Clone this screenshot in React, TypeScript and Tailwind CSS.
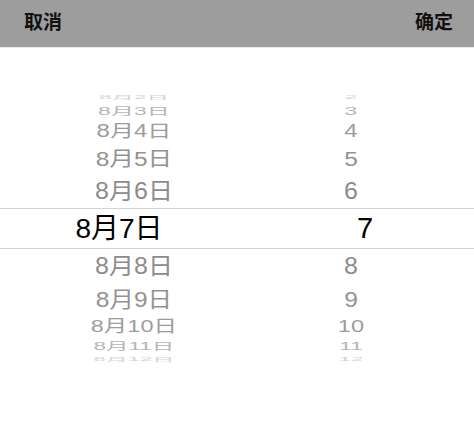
import React from 'react';

type Row = {
  day: number;
  h: number; // row height in px
  sy: number; // vertical squash from the wheel curve
  sx: number; // horizontal shrink from perspective
  color: string;
};

// rows above and below the selected one, farthest first / nearest first
const above: Row[] = [
  { day: 2, h: 12, sy: 0.2, sx: 0.9, color: '#d4d4d4' },
  { day: 3, h: 16, sy: 0.42, sx: 0.92, color: '#b4b4b4' },
  { day: 4, h: 25, sy: 0.7, sx: 0.96, color: '#9c9c9c' },
  { day: 5, h: 30, sy: 0.82, sx: 0.98, color: '#929292' },
  { day: 6, h: 34, sy: 0.92, sx: 1, color: '#8c8c8c' },
];

const below: Row[] = [
  { day: 8, h: 35, sy: 0.92, sx: 1, color: '#8c8c8c' },
  { day: 9, h: 30, sy: 0.85, sx: 0.98, color: '#929292' },
  { day: 10, h: 24, sy: 0.66, sx: 0.94, color: '#9c9c9c' },
  { day: 11, h: 16, sy: 0.42, sx: 0.9, color: '#b4b4b4' },
  { day: 12, h: 11, sy: 0.2, sx: 0.88, color: '#d4d4d4' },
];

const FONT = "font-['Liberation_Sans','Noto_Sans_CJK_SC',sans-serif]";

function WheelRow({ row }: { row: Row }) {
  const t = { transform: `scale(${row.sx}, ${row.sy})`, color: row.color };
  return (
    <div className="flex items-center overflow-hidden" style={{ height: row.h }}>
      <div className="w-[268px] flex justify-center">
        <span className="text-[25px] leading-none whitespace-nowrap" style={t}>
          8月{row.day}日
        </span>
      </div>
      <div className="w-[166px] flex justify-center">
        <span className="text-[25px] leading-none" style={t}>
          {row.day}
        </span>
      </div>
    </div>
  );
}

export default function App() {
  return (
    <div className={`w-[474px] h-[437px] bg-white overflow-hidden ${FONT}`}>
      {/* toolbar */}
      <div className="h-[47px] bg-[#9d9d9d] flex items-center justify-between pl-[24px] pr-[21px] shadow-[0_1px_1px_rgba(0,0,0,0.08)]">
        <span className="text-[19px] font-bold text-[#111]">取消</span>
        <span className="text-[19px] font-bold text-[#111]">确定</span>
      </div>

      {/* wheel */}
      <div className="pt-[44px] flex flex-col">
        {above.map((r) => (
          <WheelRow key={r.day} row={r} />
        ))}
        <div className="h-[41px] border-y border-[#d4d4d4] flex items-center">
          <div className="w-[268px] flex justify-center pr-[30px]">
            <span className="text-[28px] leading-none text-black whitespace-nowrap">8月7日</span>
          </div>
          <div className="w-[166px] flex justify-center pl-[28px]">
            <span className="text-[29px] leading-none text-black">7</span>
          </div>
        </div>
        {below.map((r) => (
          <WheelRow key={r.day} row={r} />
        ))}
      </div>
    </div>
  );
}
